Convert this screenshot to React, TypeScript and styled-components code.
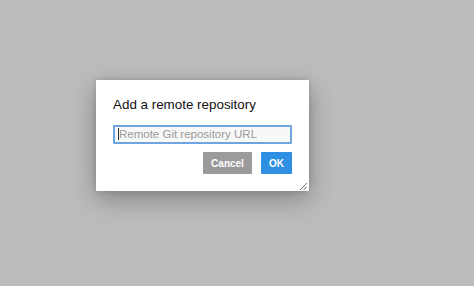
import React from "react";
import styled, { createGlobalStyle } from "styled-components";

const Global = createGlobalStyle`
  html, body { margin: 0; padding: 0; }
  body {
    background: #bcbcbc;
    font-family: "Liberation Sans", Arial, Helvetica, sans-serif;
  }
`;

const Stage = styled.div`
  width: 474px;
  height: 286px;
  box-sizing: border-box;
  padding: 80px 0 0 96px;
  background: #bcbcbc;
`;

const Dialog = styled.div`
  position: relative;
  width: 213px;
  height: 111px;
  box-sizing: border-box;
  padding: 17px;
  background: #ffffff;
  box-shadow: 0 8px 24px rgba(0, 0, 0, 0.3), 0 0 6px rgba(0, 0, 0, 0.14);
  display: flex;
  flex-direction: column;
`;

const Title = styled.h1`
  margin: 0 0 11px 0;
  font-size: 13.4px;
  line-height: 16px;
  font-weight: 400;
  color: #111;
`;

const Field = styled.div`
  position: relative;
  width: 179px;
  height: 19px;
`;

const Input = styled.input`
  width: 100%;
  height: 100%;
  box-sizing: border-box;
  border: 2px solid #6ea5de;
  border-radius: 1px;
  background: #f8f8f8;
  padding: 0 0 0 4px;
  font-family: inherit;
  font-size: 11.5px;
  color: #222;
  outline: none;
  caret-color: transparent;
  &::placeholder {
    color: #9a9a9a;
  }
`;

const Caret = styled.span`
  position: absolute;
  left: 5px;
  top: 4px;
  width: 1px;
  height: 12px;
  background: #333;
`;

const Actions = styled.div`
  display: flex;
  justify-content: flex-end;
  gap: 9px;
  margin-top: 9px;
  width: 179px;
`;

const Button = styled.button<{ $primary?: boolean }>`
  height: 22px;
  padding: 0;
  width: ${(p) => (p.$primary ? "31px" : "49px")};
  border: none;
  border-radius: 1px;
  background: ${(p) => (p.$primary ? "#2f8fe2" : "#9b9b9b")};
  color: #fff;
  font-family: inherit;
  font-weight: 700;
  font-size: 10px;
  cursor: pointer;
`;

const Grip = styled.svg`
  position: absolute;
  right: 2px;
  bottom: 1px;
  width: 8px;
  height: 8px;
`;

export default function App() {
  return (
    <>
      <Global />
      <Stage>
        <Dialog>
          <Title>Add a remote repository</Title>
          <Field>
            <Input placeholder="Remote Git repository URL" />
            <Caret />
          </Field>
          <Actions>
            <Button>Cancel</Button>
            <Button $primary>OK</Button>
          </Actions>
          <Grip viewBox="0 0 8 8">
            <line x1="1" y1="8" x2="8" y2="1" stroke="#777" strokeWidth="1" />
            <line x1="4.5" y1="8" x2="8" y2="4.5" stroke="#777" strokeWidth="1" />
          </Grip>
        </Dialog>
      </Stage>
    </>
  );
}
